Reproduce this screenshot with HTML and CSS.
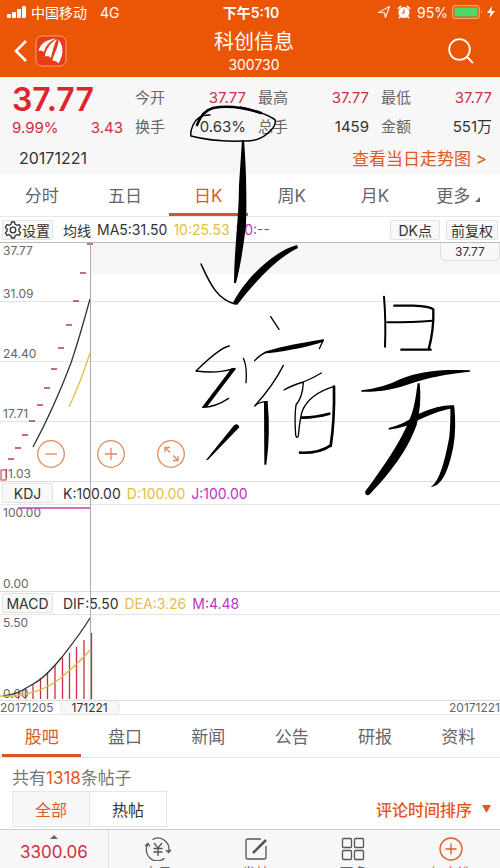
FILE: index.html
```html
<!DOCTYPE html>
<html lang="zh-CN">
<head>
	<meta charset="UTF-8">
	<meta name="viewport" content="width=device-width, initial-scale=1">
	<title>科创信息 300730</title>
	<link rel="stylesheet" href="styles.css">
</head>
<body>
<div class="app">

	<header class="top">
		<div class="status">
			<div class="status-left">
				<svg width="20" height="12" viewBox="0 0 20 12" fill="#fff"><rect x="0" y="8" width="4" height="4" rx="1"/><rect x="5" y="6" width="4" height="6" rx="1"/><rect x="10" y="3" width="4" height="9" rx="1"/><rect x="15" y="0" width="4" height="12" rx="1"/></svg>
				<span>中国移动</span>
				<span class="network">4G</span>
			</div>
			<div class="clock">下午5:10</div>
			<div class="status-right">
				<svg width="14" height="14" viewBox="0 0 14 14" fill="none" stroke="#ffe6d5" stroke-width="1.2" stroke-linejoin="round"><path d="M1.500 7.500 12.500 1.500 8.500 12.500 7.200 7.500Z"/></svg>
				<svg class="alarm" width="14" height="14" viewBox="0 0 14 14"><circle cx="7" cy="7.500" r="5.500" fill="#fff"/><path d="M1 4 4 1M13 4 10 1M3.500 11.500 2 13.200M10.500 11.500 12 13.200" stroke="#fff" stroke-width="1.600"/><path d="M7 4.500V8H4.500" fill="none" stroke="#ea5506" stroke-width="1.200"/></svg>
				<span>95%</span>
				<svg width="31" height="14" viewBox="0 0 31 14"><rect x=".7" y=".7" width="26.600" height="12.600" rx="2.500" fill="none" stroke="#f5a873" stroke-width="1.200"/><rect x="2.500" y="2.500" width="23" height="9" rx="1" fill="#4cd964"/><path d="M29 5v4q2-2 0-4" fill="#f5a873"/></svg>
				<svg width="8" height="12" viewBox="0 0 8 12" fill="#fff"><path d="M5 0 0 7h3.500L2.500 12 8 5H4.500Z"/></svg>
			</div>
		</div>
		<div class="titlebar">
			<div class="title-left">
				<button class="plain" aria-label="返回"><svg width="14" height="24" viewBox="0 0 14 24" fill="none" stroke="#fff" stroke-width="2.600"><path d="M12 2 2 12 12 22"/></svg></button>
				<a href="#" aria-label="首页"><svg width="32" height="32" viewBox="0 0 32 32"><rect x="1" y="1" width="30" height="30" rx="6" fill="#e43d17" stroke="#f9a07c"/><g fill="#fff"><path d="M3.500 16C5 9 11 4.500 21 3.500 14.500 6.500 10.500 10.500 9 17Q6.500 14.500 3.500 16Z"/><path d="M10 21.500C10.500 14 15.500 8 22 4 19 9.500 17.500 16 16 23Q13.500 20 10 21.500Z"/><path d="M17.500 26C18.500 19 23.500 13 23.500 4.500 28.500 11 29 19 23.500 28.500Q21.500 25 17.500 26Z"/></g></svg></a>
			</div>
			<h1>科创信息<small>300730</small></h1>
			<button class="plain search" aria-label="搜索"><svg width="26" height="26" viewBox="0 0 26 26" fill="none" stroke="#fff" stroke-width="1.800"><circle cx="11.500" cy="11.500" r="10.300"/><path d="M19 19 25 25"/></svg></button>
		</div>
	</header>

	<section class="quote">
		<div class="figures">
			<strong class="price">37.77</strong>
			<dl><dt>今开</dt><dd class="up">37.77</dd></dl>
			<dl><dt>最高</dt><dd class="up">37.77</dd></dl>
			<dl><dt>最低</dt><dd class="up">37.77</dd></dl>
			<div class="change"><span>9.99%</span><span>3.43</span></div>
			<dl><dt>换手</dt><dd>0.63%</dd></dl>
			<dl><dt>总手</dt><dd>1459</dd></dl>
			<dl><dt>金额</dt><dd>551万</dd></dl>
		</div>
		<div class="day">
			<time datetime="2017-12-21">20171221</time>
			<a href="#">查看当日走势图 &gt;</a>
		</div>
	</section>

	<nav class="tabs">
		<a href="#">分时</a>
		<a href="#">五日</a>
		<a href="#" class="active">日K</a>
		<a href="#">周K</a>
		<a href="#">月K</a>
		<a href="#">更多<svg class="corner" width="5" height="5" viewBox="0 0 5 5"><path d="M5 0V5H0Z" fill="#666"/></svg></a>
	</nav>

	<section class="charts">
		<div class="legend legend-ma">
			<button class="chip gear"><svg width="18" height="18" viewBox="0 0 18 18" fill="none" stroke="#333" stroke-width="1.300" stroke-linejoin="round"><path d="M7.500 1h3l.6 2.300 1.700 1 2.300-.7 1.500 2.600-1.700 1.700v2.200l1.700 1.700-1.500 2.600-2.300-.7-1.700 1L10.500 17h-3l-.6-2.300-1.700-1-2.300.7-1.500-2.600 1.700-1.700V7.900L1.400 6.200l1.500-2.600 2.300.7 1.700-1Z"/><circle cx="9" cy="9" r="2.800"/></svg>设置</button>
			<span class="name">均线</span>
			<span>MA5:31.50</span>
			<span class="yellow">10:25.53</span>
			<span class="purple">20:--</span>
			<button class="chip push">DK点</button>
			<button class="chip">前复权</button>
		</div>
		<div class="plot">
			<div class="band"></div>
			<svg width="100%" height="238">
				<g stroke="#e3e3e3"><line x1="0" x2="100%" y1="58.500" y2="58.500"/><line x1="0" x2="100%" y1="118.500" y2="118.500"/><line x1="0" x2="100%" y1="178.500" y2="178.500"/></g>
				<g class="axis"><text x="3" y="12">37.77</text><text x="3" y="55">31.09</text><text x="3" y="115">24.40</text><text x="3" y="175">17.71</text><text x="3" y="235">11.03</text></g>
				<rect x="1" y="227" width="5" height="10" fill="#fff" stroke="#c8303a"/>
				<path d="M8 216h6M15 205h6M22 192h6M29 178h6M37 162h6M44 145h6M51 126h6M58 105h6M66 82h6M73 58h6M80 30h6M87 1h6" stroke="#b8394e" stroke-width="1.500"/>
				<path d="M33 204C47 178 60 149 71 120 78 99 84 78 90 56" fill="none" stroke="#333" stroke-width="1.300"/>
				<path d="M69 164C77 147 84 129 90 110" fill="none" stroke="#e3bf45" stroke-width="1.300"/>
			</svg>
			<span class="tag">37.77</span>
			<div class="zoomers">
				<button class="plain" aria-label="缩小"><svg width="28" height="28" viewBox="0 0 28 28"><circle cx="14" cy="14" r="13.300"/><path d="M8 14h12"/></svg></button>
				<button class="plain" aria-label="放大"><svg width="28" height="28" viewBox="0 0 28 28"><circle cx="14" cy="14" r="13.300"/><path d="M8 14h12M14 8v12"/></svg></button>
				<button class="plain" aria-label="全屏"><svg width="28" height="28" viewBox="0 0 28 28"><circle cx="14" cy="14" r="13.300"/><path d="M8 12V7.500h5M8 7.500l5 5M21 16v4.500h-5M21 20.500l-5-5"/></svg></button>
			</div>
		</div>

		<div class="legend">
			<button class="chip wide">KDJ</button>
			<span>K:100.00</span>
			<span class="yellow">D:100.00</span>
			<span class="purple">J:100.00</span>
		</div>
		<div class="plot">
			<svg width="100%" height="86">
				<g class="axis"><text x="3" y="12">100.00</text><text x="3" y="83">0.00</text></g>
				<path d="M18 3h73" stroke="#c53cc0" stroke-width="1.500"/>
			</svg>
		</div>

		<div class="legend">
			<button class="chip wide">MACD</button>
			<span>DIF:5.50</span>
			<span class="yellow">DEA:3.26</span>
			<span class="purple">M:4.48</span>
		</div>
		<div class="plot">
			<svg width="100%" height="85">
				<g class="axis"><text x="3" y="12">5.50</text><text x="3" y="83">0.00</text></g>
				<path d="M18.500 84v-7M25.500 84v-10M33 84V69M40.500 84V63M47.500 84V57M55 84V50M62.500 84V43M69.500 84V38M76.500 84V32M84 84V25M91.500 84V18" stroke="#c9303f" stroke-width="1.300"/>
				<path d="M3 81C14 80 20 77 33 69 43 64 53 53 62 42 73 28 81 18 90 3" fill="none" stroke="#333" stroke-width="1.300"/>
				<path d="M0 81C18 82 27 79 40 75 50 71 57 66 62 62 72 53 81 46 90 35" fill="none" stroke="#e3b93f" stroke-width="1.300"/>
			</svg>
		</div>
		<i class="crosshair"></i>
	</section>
	<div class="dates">
		<time>20171205</time>
		<span class="cursor-date">171221</span>
		<time class="push">20171221</time>
	</div>

	<nav class="tabs">
		<a href="#" class="active">股吧</a>
		<a href="#">盘口</a>
		<a href="#">新闻</a>
		<a href="#">公告</a>
		<a href="#">研报</a>
		<a href="#">资料</a>
	</nav>

	<section class="posts">
		<p>共有<b>1318</b>条帖子</p>
		<div class="filters">
			<button class="filter on">全部</button>
			<button class="filter">热帖</button>
			<button class="plain sort">评论时间排序<svg width="9" height="8" viewBox="0 0 9 8"><path d="M0 0H9L4.500 8Z" fill="#e8541a"/></svg></button>
		</div>
	</section>

	<footer class="toolbar">
		<a href="#" class="index">
			<svg width="8" height="4" viewBox="0 0 8 4"><path d="M4 0 8 4H0Z" fill="#666"/></svg>
			<strong>3300.06</strong>
			<span>上证 +0.38%</span>
		</a>
		<a href="#"><svg width="28" height="24" viewBox="0 0 28 24" fill="none" stroke="#555" stroke-width="1.300"><path d="M20.500 21.200A11 11 0 0 1 4 7M8.500 2.500A11 11 0 0 1 24.500 15M1 9 4 6.500l2 3M22 13l2.500 2.500L27 13M10 6l4 5 4-5M9.500 11.500h9M9.500 15h9M14 11v8"/></svg>交易</a>
		<a href="#"><svg width="26" height="24" viewBox="0 0 26 24" fill="none" stroke="#555" stroke-width="1.300"><path d="M18 2H5Q3 2 3 4v16q0 2 2 2h16q2 0 2-2V9"/><path d="M10 16 23 3" stroke-width="2.500"/></svg>发帖</a>
		<a href="#"><svg width="24" height="24" viewBox="0 0 24 24" fill="none" stroke="#555" stroke-width="1.300"><rect x="1.500" y="1.500" width="9" height="9" rx="1"/><rect x="13.500" y="1.500" width="9" height="9" rx="1"/><rect x="1.500" y="13.500" width="9" height="9" rx="1"/><rect x="13.500" y="13.500" width="9" height="9" rx="1"/></svg>更多</a>
		<a href="#" class="add"><svg width="24" height="24" viewBox="0 0 24 24" fill="none" stroke="#e05a28" stroke-width="1.300"><circle cx="12" cy="12" r="11"/><path d="M6.500 12h11M12 6.500v11"/></svg>加自选</a>
	</footer>

	<!-- pen marks over the page -->
	<svg class="ink" width="500" height="520" viewBox="0 0 500 520">
		<path class="pen" d="M210 115Q198 114 193 125 190 132 191 136 214 142 242 141C258 142 266 136 273 128 276 123 276 120 274 119 264 113 254 110 240 107" stroke-width="1.500"/>
		<path class="pen" d="M197 125Q202 111 213 108 234 104 261 113" stroke-width="2.500"/>
		<path d="M242 140h2C246 165 247 195 246 225 243 250 240 268 236 283H234C234 250 239 218 239 185Z"/>
		<path class="pen" d="M201 264C209 281 216 299 235 304" stroke-width="1.500"/>
		<path d="M233 303C246 277 276 250 297 245L298 248Q272 260 237 305Z"/>
		<svg x="180" y="300" width="320" height="210" viewBox="0 0 960 630" overflow="visible">
			<g class="pen" stroke-width="4">
				<path d="M148 138Q118 144 48 213 110 222 165 205M68 322Q105 322 146 295"/>
				<path d="M190 175Q202 200 198 248M272 50 297 88"/>
				<path d="M224 182Q242 162 262 156M430 120 418 146"/>
				<path d="M310 196Q280 256 224 318 240 304 262 305"/>
				<path d="M312 270Q335 256 370 246 400 234 424 219M370 248Q368 290 348 315 343 350 347 405 350 418 355 408 360 350 368 330 390 282 460 260"/>
				<path d="M612-10Q618 60 615 140M622 67Q700 67 757 62" stroke-width="6"/>
				<path d="M643 17H700Q750 19 760 28 762 90 746 148M664 149H752" stroke-width="7"/>
				<path d="M462 260Q464 360 452 438M366 353Q410 352 448 341M360 458Q420 460 452 436" stroke-width="8"/>
			</g>
			<path d="M155 204 168 206 80 322H66Z"/>
			<path d="M78 480 162 376Q175 368 178 382L84 479Z"/>
			<path d="M250 157Q300 139 430 118V125Q370 146 262 160Z"/>
			<path d="M252 306H263Q272 400 259 494H253Z"/>
			<path d="M544 271Q610 264 660 238C720 213 780 207 870 211V215C780 224 740 236 700 248 640 270 600 276 544 275Z"/>
			<path d="M713 250H719Q726 310 710 375C675 470 610 540 570 582 562 590 553 584 556 574 610 500 660 430 688 360 706 320 708 280 713 250Z"/>
			<path d="M626 384Q670 374 720 340 780 313 822 316V324Q780 330 720 358 680 384 626 389Z"/>
			<path d="M811 318 823 320C827 360 827 400 820 440 805 515 785 558 752 561 785 540 800 450 808 410Q812 370 811 318Z"/>
		</svg>
	</svg>
</div>
</body>
</html>
```

FILE: styles.css
```css
* {
	box-sizing: border-box;
}
body {
	margin: 0;
	background: #fff;
	color: #333;
	font-family: Inter, "Noto Sans CJK SC", sans-serif;
	font-size: 14px;
}
a {
	color: inherit;
	text-decoration: none;
}
svg {
	display: block;
	flex: none;
}
button {
	font: inherit;
	color: inherit;
	cursor: pointer;
}
.plain {
	border: 0;
	padding: 0;
	background: none;
}
.push {
	margin-left: auto;
}
.app {
	position: relative;
	height: 100vh;
	overflow: hidden;
}

/* status bar and title */
.top {
	background: #ea5506;
	color: #fff;
}
.status {
	display: grid;
	grid-template-columns: 1fr auto 1fr;
	align-items: center;
	height: 24px;
	padding: 0 5px 0 7px;
}
.status-left,
.status-right {
	display: flex;
	align-items: center;
	gap: 4px;
}
.status-right {
	justify-content: flex-end;
}
.network {
	margin-left: 9px;
}
.alarm {
	margin: 0 2px;
}
.clock {
	font-weight: 600;
}
.titlebar {
	display: grid;
	grid-template-columns: 1fr auto 1fr;
	align-items: center;
	height: 53px;
	padding: 0 6px 0 14px;
}
.title-left {
	display: flex;
	align-items: center;
	gap: 7px;
}
h1 {
	margin: 0;
	font-size: 20px;
	font-weight: 400;
	line-height: 28px;
	text-align: center;
}
h1 small {
	display: block;
	font-size: 14px;
	line-height: 18px;
}
.search {
	justify-self: end;
	margin-right: 20px;
}

/* price block */
.quote {
	background: #f7f7f8;
	height: 97px;
	padding: 6px 8px 0 12px;
}
.figures {
	display: grid;
	grid-template-columns: repeat(4, 1fr);
	grid-auto-rows: 29px;
	column-gap: 12px;
	align-items: center;
}
.price {
	padding-top: 4px;
	color: #e0242c;
	font-size: 32px;
	font-weight: 600;
}
.change {
	display: flex;
	justify-content: space-between;
	padding-top: 2px;
	color: #d02c3e;
	font-size: 15px;
}
dl {
	display: flex;
	justify-content: space-between;
	margin: 0;
	font-size: 15px;
	line-height: 22px;
}
dt {
	color: #666;
}
dd {
	margin: 0;
}
.up {
	color: #cf2f4b;
}
.day {
	display: flex;
	justify-content: space-between;
	align-items: center;
	height: 33px;
	padding: 0 5px 0 7px;
	font-size: 16px;
}
.day a {
	color: #dc5a25;
	font-size: 17px;
}

/* tab rows */
.tabs {
	display: grid;
	grid-template-columns: repeat(6, 1fr);
	height: 43px;
	border-bottom: 1px solid #e6e6e6;
	color: #666;
	font-size: 17px;
	line-height: 44px;
	text-align: center;
}
.tabs a {
	height: 42px;
	margin: 0 2px;
}
.tabs .active {
	color: #e05a1e;
	border-bottom: 3px solid #d9541e;
}
.corner {
	display: inline-block;
	margin-left: 5px;
}

/* charts */
.charts {
	position: relative;
}
.crosshair {
	position: absolute;
	top: 25px;
	bottom: 0;
	left: 90px;
	width: 1px;
	background: #aaa;
}
.legend {
	display: flex;
	align-items: center;
	gap: 6px;
	height: 24px;
	padding: 0 2px;
	border-top: 1px solid #ddd;
	border-bottom: 1px solid #e6e6e6;
}
.legend-ma {
	height: 26px;
	border-top: 0;
	border-bottom: 1px solid #bbb;
}
.legend .name {
	margin-left: 4px;
}
.yellow {
	color: #e5bd49;
}
.purple {
	color: #c032bd;
}
.chip {
	display: flex;
	align-items: center;
	justify-content: center;
	height: 20px;
	padding: 0 4px;
	border: 1px solid #e2e2e2;
	border-radius: 2px;
	background: #f8f8f8;
}
.chip.gear {
	padding: 0 2px 0 1px;
}
.chip.push {
	margin-left: auto;
	padding: 0 7px;
}
.chip.wide {
	width: 51px;
	margin-right: 4px;
}
.plot {
	position: relative;
}
.axis {
	fill: #666;
	font-size: 12px;
}
.band {
	position: absolute;
	top: 0;
	right: 0;
	left: 91px;
	height: 31px;
	background: #f6f6f7;
}
.plot > svg {
	position: relative;
}
.tag {
	position: absolute;
	top: 0;
	right: 0;
	width: 60px;
	border: 1px solid #ddd;
	border-top: 0;
	border-radius: 0 0 5px 5px;
	background: #f8f8f8;
	font-size: 12px;
	line-height: 17px;
	text-align: center;
}
.zoomers {
	position: absolute;
	bottom: 13px;
	left: 37px;
	display: flex;
	gap: 32px;
	fill: none;
	stroke: #e08a5c;
	stroke-width: 1.3;
}
.dates {
	display: flex;
	align-items: center;
	gap: 6px;
	height: 15px;
	border-top: 1px solid #ddd;
	border-bottom: 1px solid #e6e6e6;
	color: #666;
	font-size: 12px;
	line-height: 13px;
}
.cursor-date {
	width: 60px;
	border: 1px solid #e2e2e2;
	border-width: 0 1px;
	border-radius: 6px;
	background: #f7f7f7;
	color: #333;
	text-align: center;
}

/* posts */
.posts {
	padding: 7px 9px 2px 12px;
}
.posts p {
	margin: 0;
	color: #777;
	font-size: 17px;
	line-height: 26px;
}
.posts b {
	color: #e05a1e;
	font-weight: 400;
}
.filters {
	display: flex;
	align-items: center;
}
.filter {
	width: 78px;
	height: 36px;
	margin-right: -1px;
	border: 1px solid #e6e6e6;
	background: #fff;
	font-size: 16px;
}
.filter.on {
	background: #f7f7f7;
	color: #e05a1e;
}
.sort {
	display: flex;
	align-items: center;
	gap: 10px;
	margin-left: auto;
	color: #e8541a;
	font-size: 16px;
	font-weight: 500;
}

/* bottom toolbar, runs off the lower edge on short screens */
.toolbar {
	display: grid;
	grid-template-columns: 109px repeat(4, 1fr);
	height: 58px;
	border-top: 1px solid #ccc;
	background: #f7f7f8;
	color: #666;
	font-size: 14px;
	line-height: 20px;
}
.toolbar a {
	display: flex;
	flex-direction: column;
	align-items: center;
	gap: 2px;
	padding-top: 7px;
}
.toolbar .index {
	gap: 1px;
	padding-top: 5px;
	border-right: 1px solid #ddd;
}
.toolbar strong {
	color: #cf2f42;
	font-size: 17px;
	font-weight: 400;
	line-height: 24px;
}
.toolbar .add {
	color: #e05a28;
}

.ink {
	position: absolute;
	top: 0;
	left: 0;
	pointer-events: none;
}
.ink .pen {
	fill: none;
	stroke: #000;
	stroke-linecap: round;
	stroke-linejoin: round;
}
```
